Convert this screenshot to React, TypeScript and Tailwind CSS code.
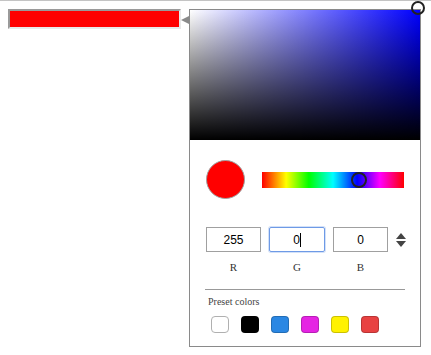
import React from "react";

export default function App() {
  const presets = ["#ffffff", "#000000", "#2a87e3", "#e524e3", "#fff200", "#e84242"];
  return (
    <div className="w-[431px] h-[355px] bg-white border-t border-[#c4c4c4] overflow-hidden font-['Liberation_Sans',Arial,sans-serif]">
      <div className="flex items-start pl-[8px] pt-[8px]">
        <div className="w-[173px] h-[20px] border-2 border-t-[#9a9a9a] border-l-[#9a9a9a] border-r-[#e8e8e8] border-b-[#e8e8e8] bg-[#ff0000]" />
        <div className="relative ml-[8px] w-[232px] h-[338px] border border-[#8a8a8a] bg-white">
          <div className="absolute left-[-9px] top-[6px] w-0 h-0 border-y-[4px] border-y-transparent border-r-[8px] border-r-[#8a8a8a]" />
          <div className="relative h-[130px] bg-[linear-gradient(to_bottom,rgba(0,0,0,0),#000),linear-gradient(to_right,#fff,#0000ff)]">
            <div className="absolute left-[221px] top-[-9px] w-[14px] h-[14px] rounded-full border-2 border-[#222]" />
          </div>
          <div className="flex items-center pl-[16px] pt-[20px]">
            <div className="w-[39px] h-[39px] rounded-full bg-[#ff0000] border border-[#a0a0a0]" />
            <div className="relative ml-[17px] w-[142px] h-[16px] bg-[linear-gradient(to_right,#f00_0%,#ff0_17%,#0f0_33%,#0ff_50%,#00f_67%,#f0f_83%,#f00_100%)]">
              <div className="absolute left-[89px] top-0 w-[16px] h-[16px] rounded-full border-2 border-[#222]" />
            </div>
          </div>
          <div className="flex items-center pl-[16px] mt-[28px] gap-[8px]">
            <div className="w-[55px] h-[25px] border border-[#a0a0a0] flex items-center justify-center text-[12px] text-black">255</div>
            <div className="w-[56px] h-[25px] border border-[#6e9ae6] rounded-[2px] shadow-[0_0_0_1px_#d3e1f8] flex items-center justify-center text-[12px] text-black">
              <span>0</span>
              <span className="w-px h-[14px] bg-black" />
            </div>
            <div className="w-[55px] h-[25px] border border-[#a0a0a0] flex items-center justify-center text-[12px] text-black">0</div>
            <div className="flex flex-col items-center gap-[2px] ml-[0px]">
              <div className="w-0 h-0 border-x-[5px] border-x-transparent border-b-[6px] border-b-[#444]" />
              <div className="w-0 h-0 border-x-[5px] border-x-transparent border-t-[6px] border-t-[#444]" />
            </div>
          </div>
          <div className="flex pl-[16px] mt-[8px] gap-[8px] font-['Liberation_Serif',serif] text-[11px] leading-[14px] text-[#333]">
            <div className="w-[55px] text-center">R</div>
            <div className="w-[56px] text-center">G</div>
            <div className="w-[55px] text-center">B</div>
          </div>
          <div className="ml-[15px] mt-[15px] w-[200px] h-px bg-[#999]" />
          <div className="pl-[18px] mt-[6px] font-['Liberation_Serif',serif] text-[10px] leading-[12px] text-[#444]">Preset colors</div>
          <div className="flex pl-[21px] mt-[8px] gap-[12px]">
            {presets.map((c, i) => (
              <div
                key={i}
                className={i === 0 ? "w-[18px] h-[17px] rounded-[4px] border border-[#b0b0b0]" : "w-[18px] h-[17px] rounded-[4px] border border-black/20"}
                style={{ backgroundColor: c }}
              />
            ))}
          </div>
        </div>
      </div>
    </div>
  );
}
